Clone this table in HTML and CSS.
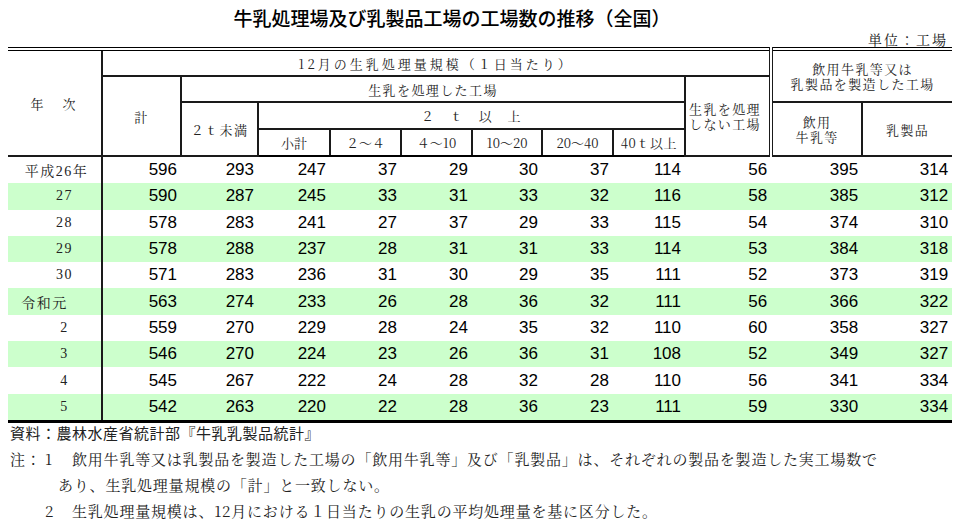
FILE: index.html
```html
<!DOCTYPE html>
<html lang="ja">
<head>
<meta charset="utf-8">
<title>牛乳処理場及び乳製品工場の工場数の推移（全国）</title>
<link rel="stylesheet" href="styles.css">
</head>
<body>
<div class="page">
  <h1 class="title">牛乳処理場及び乳製品工場の工場数の推移（全国）</h1>
  <div class="unit">単位：工場</div>
  <table class="stats">
    <colgroup>
      <col class="c-year"><col class="c-total"><col class="c-u2"><col class="c-sub"><col class="c-a"><col class="c-b"><col class="c-c"><col class="c-d"><col class="c-e"><col class="c-np"><col class="c-milk"><col class="c-prod">
    </colgroup>
    <thead>
      <tr class="hr1">
        <th rowspan="4" class="yearhd">年　次</th>
        <th colspan="9" class="scale dblr">12月の生乳処理量規模（１日当たり）</th>
        <th colspan="2" rowspan="2" class="mfg dbll">飲用牛乳等又は<br>乳製品を製造した工場</th>
      </tr>
      <tr class="hr2">
        <th rowspan="3" class="sp">計</th>
        <th colspan="7" class="sp">生乳を処理した工場</th>
        <th rowspan="3" class="noproc dblr">生乳を処理<br>しない工場</th>
      </tr>
      <tr class="hr3">
        <th rowspan="2" class="sp">２ｔ未満</th>
        <th colspan="6" class="sp">２　ｔ　以　上</th>
        <th rowspan="2" class="sp two dbll">飲用<br>牛乳等</th>
        <th rowspan="2" class="sp">乳製品</th>
      </tr>
      <tr class="hr4">
        <th>小計</th><th>２～４</th><th>４～10</th><th>10～20</th><th>20～40</th><th class="sp1">40ｔ以上</th>
      </tr>
    </thead>
    <tbody>
      <tr><td class="yr y-era">平成26年</td><td>596</td><td>293</td><td>247</td><td>37</td><td>29</td><td>30</td><td>37</td><td>114</td><td>56</td><td>395</td><td>314</td></tr>
      <tr class="alt"><td class="yr y-num">27</td><td>590</td><td>287</td><td>245</td><td>33</td><td>31</td><td>33</td><td>32</td><td>116</td><td>58</td><td>385</td><td>312</td></tr>
      <tr><td class="yr y-num">28</td><td>578</td><td>283</td><td>241</td><td>27</td><td>37</td><td>29</td><td>33</td><td>115</td><td>54</td><td>374</td><td>310</td></tr>
      <tr class="alt"><td class="yr y-num">29</td><td>578</td><td>288</td><td>237</td><td>28</td><td>31</td><td>31</td><td>33</td><td>114</td><td>53</td><td>384</td><td>318</td></tr>
      <tr><td class="yr y-num">30</td><td>571</td><td>283</td><td>236</td><td>31</td><td>30</td><td>29</td><td>35</td><td>111</td><td>52</td><td>373</td><td>319</td></tr>
      <tr class="alt"><td class="yr y-era2">令和元</td><td>563</td><td>274</td><td>233</td><td>26</td><td>28</td><td>36</td><td>32</td><td>111</td><td>56</td><td>366</td><td>322</td></tr>
      <tr><td class="yr y-num">2</td><td>559</td><td>270</td><td>229</td><td>28</td><td>24</td><td>35</td><td>32</td><td>110</td><td>60</td><td>358</td><td>327</td></tr>
      <tr class="alt"><td class="yr y-num">3</td><td>546</td><td>270</td><td>224</td><td>23</td><td>26</td><td>36</td><td>31</td><td>108</td><td>52</td><td>349</td><td>327</td></tr>
      <tr><td class="yr y-num">4</td><td>545</td><td>267</td><td>222</td><td>24</td><td>28</td><td>32</td><td>28</td><td>110</td><td>56</td><td>341</td><td>334</td></tr>
      <tr class="alt last"><td class="yr y-num">5</td><td>542</td><td>263</td><td>220</td><td>22</td><td>28</td><td>36</td><td>23</td><td>111</td><td>59</td><td>330</td><td>334</td></tr>
    </tbody>
  </table>
  <div class="source">資料：農林水産省統計部『牛乳乳製品統計』</div>
  <div class="notes">
    <div class="note"><span class="nlabel">注：</span><span class="nnum">1</span><span class="ntext">飲用牛乳等又は乳製品を製造した工場の「飲用牛乳等」及び「乳製品」は、それぞれの製品を製造した実工場数で</span></div>
    <div class="note cont"><span class="ntext">あり、生乳処理量規模の「計」と一致しない。</span></div>
    <div class="note"><span class="nlabel"></span><span class="nnum">2</span><span class="ntext">生乳処理量規模は、12月における１日当たりの生乳の平均処理量を基に区分した。</span></div>
  </div>
</div>
</body>
</html>
```

FILE: styles.css
```css
html, body {
  margin: 0;
  padding: 0;
  background: #fff;
}

body {
  font-family: "Noto Serif CJK JP", "Liberation Serif", "Noto Sans CJK JP", serif;
  color: #1a1a1a;
}

.page {
  width: 944px;
  margin-left: 8px;
}

.title {
  margin: 0;
  padding: 6px 56px 0 0;
  height: 24px;
  line-height: 24px;
  text-align: center;
  font-family: "Noto Sans CJK JP", sans-serif;
  font-weight: 500;
  font-size: 19px;
  color: #000;
}

.unit {
  margin-top: 1px;
  height: 16px;
  line-height: 16px;
  text-align: right;
  padding-right: 4px;
  font-size: 14px;
  letter-spacing: 2px;
}

.stats {
  width: 944px;
  table-layout: fixed;
  border-collapse: collapse;
  border-top: 4px double #000;
}

.c-year { width: 94px; }
.c-total { width: 79px; }
.c-u2 { width: 77px; }
.c-sub { width: 72px; }
.c-a { width: 71px; }
.c-b { width: 71px; }
.c-c { width: 70px; }
.c-d { width: 71px; }
.c-e { width: 72px; }
.c-np { width: 86px; }
.c-milk { width: 91px; }
.c-prod { width: 90px; }

.stats th {
  border: 2px solid #1a1a1a;
  font-weight: normal;
  font-size: 13px;
  line-height: 15px;
  padding: 0;
  color: #222;
  vertical-align: middle;
  text-align: center;
}

.stats thead tr > th:first-child.yearhd {
  border-left: none;
}

.stats .mfg {
  border-right: none;
  letter-spacing: 1.4px;
}

.stats .hr3 th:last-child {
  border-right: none;
}

.hr1 th { height: 24px; }
.hr2 th { height: 24px; }
.hr3 th { height: 25px; }
.hr4 th { height: 25px; }

.yearhd {
  letter-spacing: 3px;
}

.scale {
  letter-spacing: 3px;
}

.sp {
  letter-spacing: 1.4px;
}

.sp1 {
  letter-spacing: 0.6px;
}

.two {
  line-height: 14px;
}

.noproc {
  text-align: left !important;
  padding-left: 3px !important;
  letter-spacing: 1.4px;
}

.stats .dblr {
  border-right: 4px double #1a1a1a;
}

.stats .dbll {
  border-left: 4px double #1a1a1a;
}

.stats thead tr.hr4 th {
  border-bottom: 2px solid #000;
}

.stats td {
  height: 26.3px;
  padding: 0 4px 0 0;
  text-align: right;
  vertical-align: middle;
  font-family: "Liberation Sans", Arial, sans-serif;
  font-size: 17px;
  color: #000;
  border: none;
}

.stats td.yr {
  border-right: 2px solid #1a1a1a;
  font-family: "Liberation Serif", "Noto Serif CJK JP", "Noto Sans CJK JP", serif;
  font-size: 14px;
  letter-spacing: 1.5px;
  color: #222;
  padding: 0;
}

.stats td.y-era {
  text-align: center;
  padding-left: 4px;
}

.stats td.y-num {
  text-align: center;
  padding-left: 20px;
}

.stats td.y-era2 {
  text-align: center;
  padding-right: 20px;
}

.stats tr.alt td {
  background: #ccffcc;
}

.stats tr.last td {
  border-bottom: 3px solid #000;
}

.stats tr.last td.yr {
  border-bottom: 3px solid #000;
}

.source {
  height: 20px;
  line-height: 20px;
  padding-left: 2px;
  font-family: "Noto Sans CJK JP", sans-serif;
  font-size: 15px;
  letter-spacing: 0.5px;
  color: #222;
}

.notes {
  margin-top: 3px;
  font-size: 15px;
  letter-spacing: 0.8px;
  color: #222;
}

.note {
  display: flex;
  height: 26px;
  line-height: 26px;
  padding-left: 2px;
  white-space: nowrap;
}

.note.cont {
  padding-left: 50px;
}

.nlabel {
  width: 35px;
  flex: none;
}

.nnum {
  width: 27px;
  flex: none;
}
```
